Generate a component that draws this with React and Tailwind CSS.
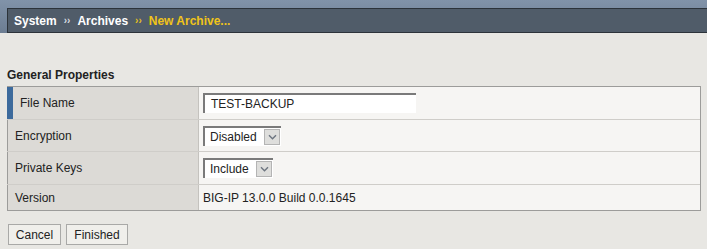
import React from "react";

const font = { fontFamily: '"Liberation Sans", Arial, sans-serif' };

function Chevron() {
  return (
    <svg width="9" height="6" viewBox="0 0 9 6" className="block">
      <path d="M1 1.2 L4.5 4.8 L8 1.2" fill="none" stroke="#6d7580" strokeWidth="1.4" />
    </svg>
  );
}

function FakeSelect({ value, width }) {
  return (
    <div className={`flex items-center justify-between h-[20px] bg-white border-t-2 border-l-2 border-[#7a7a7a] pl-[5px] pr-[1px] ${width}`}>
      <span>{value}</span>
      <span className="w-[16px] h-[16px] bg-[#dededc] border border-[#b4b4b4] flex items-center justify-center">
        <Chevron />
      </span>
    </div>
  );
}

export default function App() {
  const rows = [
    { label: "File Name", active: true, h: "h-[33px]", value: (
      <div className="w-[213px] h-[20px] bg-white border-t-2 border-l-2 border-[#7a7a7a] pl-[6px] flex items-center">TEST-BACKUP</div>
    ) },
    { label: "Encryption", h: "h-[32px]", value: <FakeSelect value="Disabled" width="w-[78px]" /> },
    { label: "Private Keys", h: "h-[33px]", value: <FakeSelect value="Include" width="w-[70px]" /> },
    { label: "Version", h: "h-[25px]", value: <span>BIG-IP 13.0.0 Build 0.0.1645</span> },
  ];

  return (
    <div className="w-[707px] h-[249px] bg-[#e8e7e3] text-[12px] text-[#222]" style={font}>
      {/* Breadcrumb header */}
      <div className="bg-[linear-gradient(180deg,#8193a9,#6c7d92)] pt-[8px] pl-[7px]">
        <div className="h-[25px] bg-[#505c69] border-t border-l border-b border-[#2c333a] flex items-center pl-[6px] font-bold text-[12px] text-white">
          <span>System</span>
          <span className="mx-[7px] text-[10px] text-[#d8dde2]">››</span>
          <span>Archives</span>
          <span className="mx-[7px] text-[10px] text-[#e8c020]">››</span>
          <span className="text-[#f0c419]">New Archive...</span>
        </div>
      </div>

      <div className="px-[7px]">
        <div className="pt-[35px] h-[53px] font-bold leading-[14px] text-[#222]">General Properties</div>

        <div className="w-[694px] border-t border-r border-b border-[#9c9c9a] bg-[#f6f5f3]">
          {rows.map((r, i) => (
            <div key={r.label} className={`flex ${i < rows.length - 1 ? "border-b border-[#cfcdc9]" : ""} ${r.h}`}>
              <div className={`w-[192px] shrink-0 bg-[#dcdad6] border-r border-[#c4c2be] flex items-center ${r.active ? "border-l-[6px] border-l-[#3c6a9c] pl-[7px]" : "border-l border-l-[#9c9c9a] pl-[7px]"}`}>
                {r.label}
              </div>
              <div className="flex items-center pl-[4px]">{r.value}</div>
            </div>
          ))}
        </div>

        <div className="flex gap-[5px] pt-[13px] pl-[1px]">
          <button className="h-[21px] w-[53px] bg-[#f0efeb] border border-[#a9a9a7] text-[12px] text-[#222]">Cancel</button>
          <button className="h-[21px] w-[62px] bg-[#f0efeb] border border-[#a9a9a7] text-[12px] text-[#222]">Finished</button>
        </div>
      </div>
    </div>
  );
}
